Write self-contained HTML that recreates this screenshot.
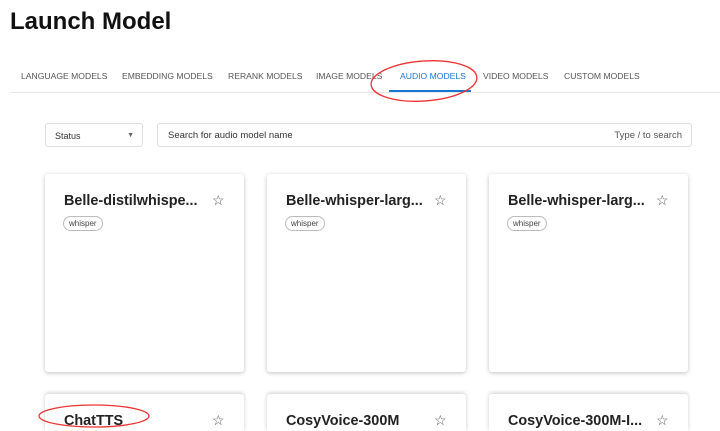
<!DOCTYPE html><html style="width:720px;height:431px;overflow:hidden"><head><style>
body{margin:0;width:720px;height:431px;overflow:hidden;background:#fff;font-family:"Liberation Sans",sans-serif;position:relative}
.a{position:absolute}
h1{position:absolute;left:10px;top:8px;margin:0;font-size:24px;font-weight:bold;color:#111}
.tab{position:absolute;top:71px;font-size:8.6px;color:#555;white-space:nowrap}
.card{position:absolute;width:199px;height:198px;background:#fff;box-shadow:0 1px 4px rgba(0,0,0,.25);border-radius:3px}
.card.r2{height:37px;border-radius:3px 3px 0 0;box-shadow:0 -1px 4px rgba(0,0,0,.2)}
.card .t{position:absolute;left:19px;top:19px;font-size:14.4px;font-weight:bold;color:#222}
.card .s{position:absolute;left:167px;top:18px;font-size:14px;color:#555}
.card .g{position:absolute;left:18px;top:42px;font-size:8px;color:#444;border:1px solid #bbb;border-radius:9px;padding:2px 5px}
</style></head><body>
<h1>Launch Model</h1>
<div class="tab" style="left:21px">LANGUAGE MODELS</div>
<div class="tab" style="left:122px">EMBEDDING MODELS</div>
<div class="tab" style="left:228px">RERANK MODELS</div>
<div class="tab" style="left:316px">IMAGE MODELS</div>
<div class="tab" style="left:400px;color:#1976d2">AUDIO MODELS</div>
<div class="tab" style="left:483px">VIDEO MODELS</div>
<div class="tab" style="left:564px">CUSTOM MODELS</div>
<div class="a" style="left:10px;top:92px;width:710px;height:1px;background:#e6e6e6"></div>
<div class="a" style="left:389px;top:90px;width:82px;height:2px;background:#1976d2"></div>
<svg class="a" style="left:368px;top:58px" width="112" height="46"><ellipse cx="56" cy="23" rx="53" ry="20" fill="none" stroke="#e33" stroke-width="1.3" transform="rotate(-4 56 23)"/></svg>
<div class="a" style="left:45px;top:123px;width:98px;height:24px;border:1px solid #ddd;border-radius:3px;font-size:9px;color:#333;line-height:24px;padding-left:9px;box-sizing:border-box">Status<span style="position:absolute;right:8px;font-size:7px;color:#666">▼</span></div>
<div class="a" style="left:157px;top:123px;width:535px;height:24px;border:1px solid #ddd;border-radius:3px;font-size:9.5px;color:#333;line-height:24px;padding-left:10px;box-sizing:border-box">Search for audio model name<span style="position:absolute;right:9px;color:#555">Type / to search</span></div>
<div class="card" style="left:45px;top:174px"><div class="t">Belle-distilwhispe...</div><div class="s">☆</div><div class="g">whisper</div></div>
<div class="card" style="left:267px;top:174px"><div class="t">Belle-whisper-larg...</div><div class="s">☆</div><div class="g">whisper</div></div>
<div class="card" style="left:489px;top:174px"><div class="t">Belle-whisper-larg...</div><div class="s">☆</div><div class="g">whisper</div></div>
<div class="card r2" style="left:45px;top:394px"><div class="t">ChatTTS</div><div class="s">☆</div></div>
<div class="card r2" style="left:267px;top:394px"><div class="t">CosyVoice-300M</div><div class="s">☆</div></div>
<div class="card r2" style="left:489px;top:394px"><div class="t">CosyVoice-300M-I...</div><div class="s">☆</div></div>
<svg class="a" style="left:36px;top:402px" width="116" height="28"><ellipse cx="58" cy="14" rx="55" ry="11" fill="none" stroke="#e33" stroke-width="1.3"/></svg>
</body></html>
